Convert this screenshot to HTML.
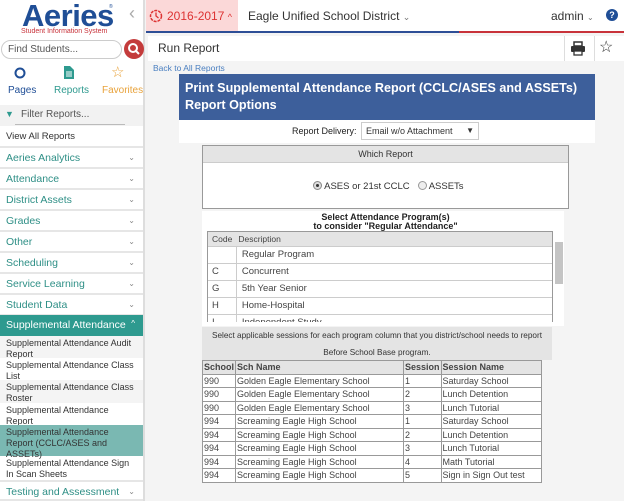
<!DOCTYPE html>
<html><head><meta charset="utf-8"><style>
*{box-sizing:border-box;margin:0;padding:0}
body{width:624px;height:501px;overflow:hidden;font-family:"Liberation Sans",sans-serif;background:#f4f4f4;position:relative;color:#333}
.abs{position:absolute}
#side{left:0;top:0;width:145px;height:501px;background:#fff;border-right:2px solid #ddd}
.logo{left:22px;top:-2px;font-size:31px;font-weight:bold;color:#1f4e96;letter-spacing:-0.5px}
.logosub{left:21px;top:28px;font-size:7px;color:#c8323a}
.find{left:1px;top:40px;width:121px;height:19px;border:1px solid #ccc;border-radius:10px;font-size:10px;color:#555;padding:3px 6px;background:#fff}
.sbtn{left:124px;top:39px;width:20px;height:20px;border-radius:50%;background:#c43c3c}
.nav{font-size:10px;top:85px}
.filt{left:0;top:105px;width:143px;height:21px;background:#f2f2f2}
.item{position:absolute;left:0;width:143px;font-size:10.5px;color:#2e8f86;padding-left:6px;border-bottom:2px solid #e6e6e6;background:#fff}
.item .c{position:absolute;right:8px;top:0;font-size:8px;color:#888}
.sub{position:absolute;left:0;width:143px;font-size:9px;color:#333;padding:2px 6px 0;line-height:11px}
#top{left:146px;top:0;width:478px;height:32px;background:#fff}
table{border-collapse:collapse}
.t2 td{border:1px solid #999;font-size:9px;color:#444;height:13.5px;padding:0 1px;background:#fff}
.t1 td{border-bottom:1px solid #ccc;font-size:9.5px;color:#444;height:17px;padding:0 4px}
</style></head><body>
<div id="side" class="abs">
<div class="abs logo">Aeries</div><div class="abs" style="left:109px;top:4px;font-size:5px;color:#1f4e96">®</div>
<div class="abs logosub">Student Information System</div>
<div class="abs" style="left:129px;top:3px;font-size:18px;color:#aaa">‹</div>
<div class="abs find">Find Students...</div>
<div class="abs sbtn"><svg width="20" height="20"><circle cx="9" cy="9" r="4" fill="none" stroke="#fff" stroke-width="2"/><path d="M12 12l3 3" stroke="#fff" stroke-width="2"/></svg></div>
<svg class="abs" style="left:14px;top:67px" width="12" height="12"><circle cx="6" cy="6" r="4.5" fill="none" stroke="#1f4e96" stroke-width="2"/></svg>
<div class="abs nav" style="left:8px;color:#1f4e96">Pages</div>
<svg class="abs" style="left:64px;top:66px" width="10" height="13"><path d="M0 0h6l4 4v9H0z" fill="#2e9a8f"/><path d="M2 6h6M2 8h6M2 10h6" stroke="#fff"/></svg>
<div class="abs nav" style="left:54px;color:#2e9a8f">Reports</div>
<div class="abs" style="left:111px;top:63px;font-size:15px;color:#e8a23a">☆</div>
<div class="abs nav" style="left:102px;color:#e8a23a">Favorites</div>
<div class="abs filt"><span style="position:absolute;left:5px;top:4px;font-size:9px;color:#2e9a8f">▼</span><span style="position:absolute;left:21px;top:4px;font-size:10px;color:#555">Filter Reports...</span><div style="position:absolute;left:15px;top:19px;width:110px;height:1px;background:#bbb"></div></div>
<div class="item" style="top:127px;height:21px;color:#333;font-size:9.5px;padding-top:4px">View All Reports</div>
<div class="item" style="top:148px;height:21px;padding-top:4px">Aeries Analytics<span class="c" style="top:5px">⌄</span></div>
<div class="item" style="top:169px;height:21px;padding-top:4px">Attendance<span class="c" style="top:5px">⌄</span></div>
<div class="item" style="top:190px;height:21px;padding-top:4px">District Assets<span class="c" style="top:5px">⌄</span></div>
<div class="item" style="top:211px;height:21px;padding-top:4px">Grades<span class="c" style="top:5px">⌄</span></div>
<div class="item" style="top:232px;height:21px;padding-top:4px">Other<span class="c" style="top:5px">⌄</span></div>
<div class="item" style="top:253px;height:21px;padding-top:4px">Scheduling<span class="c" style="top:5px">⌄</span></div>
<div class="item" style="top:274px;height:21px;padding-top:4px">Service Learning<span class="c" style="top:5px">⌄</span></div>
<div class="item" style="top:295px;height:21px;padding-top:4px">Student Data<span class="c" style="top:5px">⌄</span></div>
<div class="item" style="top:315px;height:21px;padding-top:4px;background:#2e9a8f;color:#fff;border:none">Supplemental Attendance<span class="c" style="color:#fff;top:4px">^</span></div>
<div class="sub" style="top:336px;height:22px;background:#f4f4f4">Supplemental Attendance Audit Report</div>
<div class="sub" style="top:358px;height:22px">Supplemental Attendance Class List</div>
<div class="sub" style="top:380px;height:23px;background:#f4f4f4">Supplemental Attendance Class Roster</div>
<div class="sub" style="top:403px;height:22px">Supplemental Attendance Report</div>
<div class="sub" style="top:425px;height:31px;background:#7ab8b2">Supplemental Attendance Report (CCLC/ASES and ASSETs)</div>
<div class="sub" style="top:456px;height:24px">Supplemental Attendance Sign In Scan Sheets</div>
<div class="item" style="top:480px;height:21px;padding-top:4px;border-top:2px solid #e6e6e6">Testing and Assessment<span class="c" style="top:5px">⌄</span></div>
</div>
<div id="top" class="abs">
<div class="abs" style="left:0;top:0;width:92px;height:31px;background:#fbd8d8"></div>
<svg class="abs" style="left:3px;top:9px" width="14" height="14"><circle cx="7" cy="7" r="5.5" fill="none" stroke="#d33" stroke-width="1.5" stroke-dasharray="3 1"/><path d="M7 3.5V7l2.5 2" stroke="#d33" stroke-width="1.3" fill="none"/></svg>
<div class="abs" style="left:21px;top:9px;font-size:12px;color:#d33">2016-2017 <span style="font-size:9px">^</span></div>
<div class="abs" style="left:102px;top:9px;font-size:12px;color:#333">Eagle Unified School District <span style="font-size:9px;color:#777">⌄</span></div>
<div class="abs" style="left:405px;top:9px;font-size:12px;color:#333">admin <span style="font-size:8px;color:#777">⌄</span></div>
<div class="abs" style="left:460px;top:9px;width:12px;height:12px;border-radius:50%;background:#1f4e96;color:#fff;font-size:9px;font-weight:bold;text-align:center;line-height:12px">?</div>
<div class="abs" style="left:0;top:31px;width:313px;height:2px;background:#2d4e96"></div>
<div class="abs" style="left:313px;top:31px;width:165px;height:2px;background:#c8323a"></div>
</div>
<div class="abs" style="left:148px;top:36px;width:476px;height:25px;background:#fff"></div>
<div class="abs" style="left:158px;top:41px;font-size:12px;color:#333">Run Report</div>
<div class="abs" style="left:564px;top:36px;width:1px;height:25px;background:#ddd"></div>
<div class="abs" style="left:594px;top:36px;width:1px;height:25px;background:#ddd"></div>
<svg class="abs" style="left:570px;top:41px" width="16" height="15"><rect x="4" y="1" width="8" height="4" fill="none" stroke="#333" stroke-width="1.5"/><rect x="1" y="5" width="14" height="6" rx="1" fill="#333"/><rect x="4" y="10" width="8" height="4" fill="#fff" stroke="#333" stroke-width="1.3"/></svg>
<div class="abs" style="left:599px;top:37px;font-size:16px;color:#333">☆</div>
<div class="abs" style="left:153px;top:63px;font-size:8.5px;color:#4a7fc0">Back to All Reports</div>
<div class="abs" style="left:179px;top:74px;width:416px;height:46px;background:#3d5f9b;color:#fff;font-size:12.6px;font-weight:bold;padding:6px 6px;line-height:17px;white-space:nowrap">Print Supplemental Attendance Report (CCLC/ASES and ASSETs)<br>Report Options</div>
<div class="abs" style="left:179px;top:120px;width:416px;height:23px;background:#fff"></div>
<div class="abs" style="left:292px;top:126px;font-size:9px;color:#222">Report Delivery:</div>
<div class="abs" style="left:361px;top:122px;width:118px;height:18px;border:1px solid #ccc;background:#fff;font-size:9px;padding:3px 4px">Email w/o Attachment <span style="position:absolute;right:4px;top:3px;font-size:8px">▼</span></div>
<div class="abs" style="left:202px;top:145px;width:367px;height:64px;border:1px solid #999;background:#fff">
<div style="height:17px;background:#e4e4e4;font-size:9px;text-align:center;line-height:17px;border-bottom:1px solid #ccc">Which Report</div>
<div style="position:absolute;left:110px;top:35px;font-size:9.5px"><span style="display:inline-block;width:9px;height:9px;border-radius:50%;border:1px solid #888;background:#ddd;vertical-align:-1px;position:relative"><span style="position:absolute;left:2px;top:2px;width:3px;height:3px;border-radius:50%;background:#333"></span></span> ASES or 21st CCLC &nbsp; <span style="display:inline-block;width:9px;height:9px;border-radius:50%;border:1px solid #999;background:#eee;vertical-align:-1px"></span> ASSETs</div>
</div>
<div class="abs" style="left:202px;top:211px;width:362px;height:115px;background:#fff"></div>
<div class="abs" style="left:202px;top:213px;width:367px;text-align:center;font-size:9px;font-weight:bold;line-height:9px;color:#222">Select Attendance Program(s)<br>to consider "Regular Attendance"</div>
<div class="abs" style="left:207px;top:231px;width:346px;height:91px;overflow:hidden;border:1px solid #999;border-bottom:none">
<table class="t1" style="width:346px"><tr><td style="background:#e4e4e4;width:27px;height:14px;font-size:8.5px">Code</td><td style="background:#e4e4e4;height:14px;font-size:8.5px;padding-left:2px">Description</td></tr>
<tr><td style="border-right:1px solid #ccc"></td><td style="padding-left:5px">Regular Program</td></tr>
<tr><td style="border-right:1px solid #ccc">C</td><td style="padding-left:5px">Concurrent</td></tr>
<tr><td style="border-right:1px solid #ccc">G</td><td style="padding-left:5px">5th Year Senior</td></tr>
<tr><td style="border-right:1px solid #ccc">H</td><td style="padding-left:5px">Home-Hospital</td></tr>
<tr><td style="border-right:1px solid #ccc">I</td><td style="padding-left:5px">Independent Study</td></tr></table></div>
<div class="abs" style="left:555px;top:242px;width:8px;height:42px;background:#c4c4c4"></div>
<div class="abs" style="left:202px;top:327px;width:350px;height:33px;background:#e4e4e4;font-size:8.2px;text-align:center;line-height:17px;color:#333">Select applicable sessions for each program column that you district/school needs to report<br>Before School Base program.</div>
<table class="abs t2" style="left:202px;top:360px;width:340px">
<tr><td style="width:32px;background:#e4e4e4;font-weight:bold">School</td><td style="width:168px;background:#e4e4e4;font-weight:bold">Sch Name</td><td style="width:35px;background:#e4e4e4;font-weight:bold">Session</td><td style="background:#e4e4e4;font-weight:bold">Session Name</td></tr>
<tr><td>990</td><td>Golden Eagle Elementary School</td><td>1</td><td>Saturday School</td></tr>
<tr><td>990</td><td>Golden Eagle Elementary School</td><td>2</td><td>Lunch Detention</td></tr>
<tr><td>990</td><td>Golden Eagle Elementary School</td><td>3</td><td>Lunch Tutorial</td></tr>
<tr><td>994</td><td>Screaming Eagle High School</td><td>1</td><td>Saturday School</td></tr>
<tr><td>994</td><td>Screaming Eagle High School</td><td>2</td><td>Lunch Detention</td></tr>
<tr><td>994</td><td>Screaming Eagle High School</td><td>3</td><td>Lunch Tutorial</td></tr>
<tr><td>994</td><td>Screaming Eagle High School</td><td>4</td><td>Math Tutorial</td></tr>
<tr><td>994</td><td>Screaming Eagle High School</td><td>5</td><td>Sign in Sign Out test</td></tr>
</table>
</body></html>
